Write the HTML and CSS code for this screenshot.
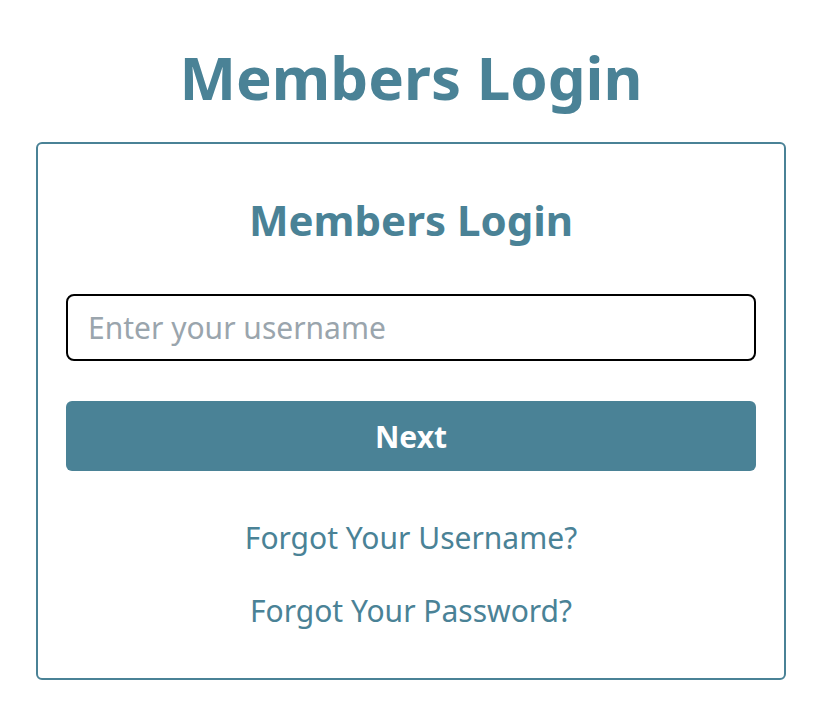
FILE: index.html
```html
<!DOCTYPE html>
<html>
<head>
<meta charset="utf-8">
<link rel="stylesheet" href="styles.css">
</head>
<body>
<div class="page">
  <h1 class="title">Members Login</h1>
  <div class="card">
    <h2 class="card-title">Members Login</h2>
    <input class="field" type="text" placeholder="Enter your username">
    <button class="btn">Next</button>
    <a class="link" href="#">Forgot Your Username?</a>
    <a class="link" href="#">Forgot Your Password?</a>
  </div>
</div>
</body>
</html>
```
FILE: styles.css
```css
html, body { margin: 0; padding: 0; background: #fff; }
body { font-family: "Noto Sans", "Open Sans", sans-serif; color: #4a8296; }
.page { width: 750px; margin-left: 36px; padding-top: 33px; display: flex; flex-direction: column; align-items: center; }
.title { margin: 0; font-size: 60px; font-weight: 700; line-height: 88px; color: #4a8296; }
.card { box-sizing: border-box; width: 750px; margin-top: 21px; border: 2px solid #4a8296; border-radius: 6px; padding: 48px 28px 46px; display: flex; flex-direction: column; align-items: stretch; }
.card-title { margin: 0; text-align: center; font-size: 42px; font-weight: 700; line-height: 56px; color: #4a8296; }
.field { box-sizing: border-box; height: 67px; margin-top: 46px; border: 2px solid #000; border-radius: 8px; padding: 0 20px; font-family: inherit; font-size: 30px; color: #333; outline: none; }
.field::placeholder { color: #9aa5ad; }
.btn { height: 70px; margin-top: 40px; border: 0; border-radius: 6px; background: #4a8296; color: #fff; font-family: inherit; font-size: 30px; font-weight: 700; }
.link { text-align: center; font-size: 30px; line-height: 42px; color: #4a8296; text-decoration: none; margin-top: 46px; }
.link + .link { margin-top: 31px; }
```
